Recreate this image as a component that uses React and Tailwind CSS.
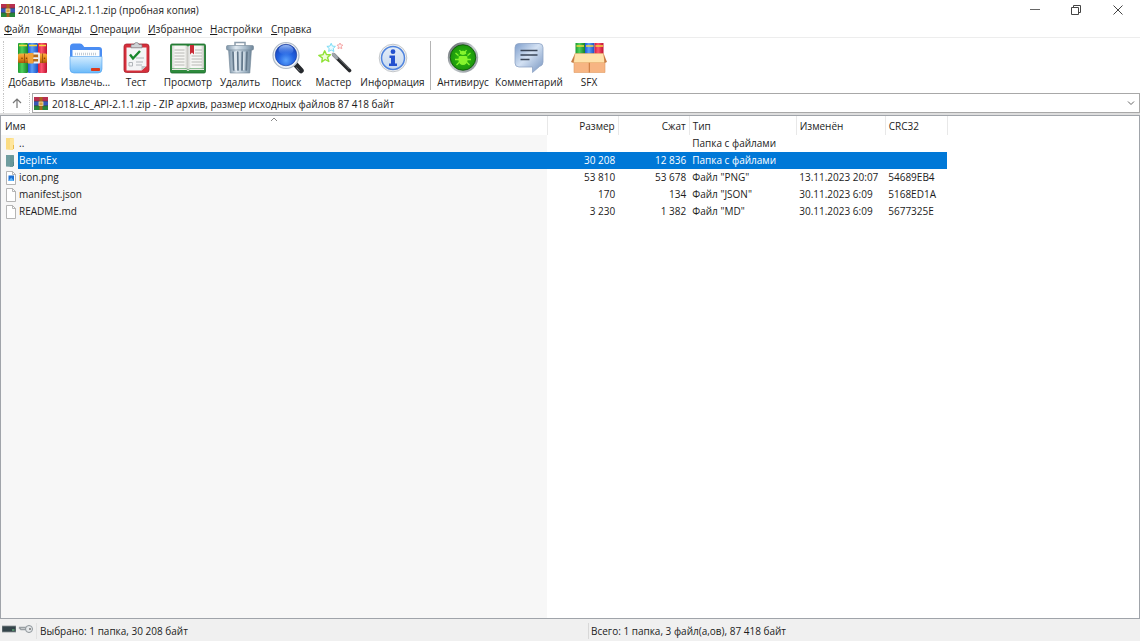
import React, { useState } from "react";

const BooksIcon = () => (
  <svg viewBox="0 0 36 34" className="w-9 h-[34px]">
    <defs>
      <linearGradient id="bookGreen" x1="0" x2="1"><stop offset="0" stopColor="#1d9a2e" /><stop offset=".4" stopColor="#4fd05e" /><stop offset="1" stopColor="#14802a" /></linearGradient>
      <linearGradient id="bookBlue" x1="0" x2="1"><stop offset="0" stopColor="#1d55d8" /><stop offset=".4" stopColor="#5aa0fa" /><stop offset="1" stopColor="#1c4fc0" /></linearGradient>
      <linearGradient id="bookRed" x1="0" x2="1"><stop offset="0" stopColor="#d81b3c" /><stop offset=".4" stopColor="#fb5470" /><stop offset="1" stopColor="#c01030" /></linearGradient>
      <linearGradient id="belt" x1="0" x2="0" y1="0" y2="1"><stop offset="0" stopColor="#f9b045" /><stop offset=".5" stopColor="#e88a1a" /><stop offset="1" stopColor="#a9560c" /></linearGradient>
    </defs>
    <rect x="4" y="2" width="10" height="30" rx="1" fill="url(#bookGreen)" />
    <rect x="14" y="2" width="10" height="30" rx="1" fill="url(#bookBlue)" />
    <rect x="24" y="2" width="9" height="30" rx="1" fill="url(#bookRed)" />
    <path d="M5 4.500h8M15 4.500h8M25 4.500h7" stroke="#f5d93c" strokeWidth="1.600" />
    <rect x="4" y="12.500" width="29" height="9.500" rx="1.500" fill="url(#belt)" />
    <path d="M10.500 12.500v9.500M28.500 12.500v9.500" stroke="#8a4a10" strokeWidth=".8" />
    <path d="M14 12h5v10.500h-5z" fill="#f0a23a" />
    <path d="M19.500 12.500h5.500v9h-5.500" fill="#b56a1c" stroke="#f1f3f5" strokeWidth="1.800" strokeLinejoin="round" />
    <path d="M20 17.200h3.500" stroke="#f2f4f6" strokeWidth="1.800" strokeLinecap="round" />
    <circle cx="8" cy="17.200" r=".8" fill="#7a3d08" />
    <circle cx="12.500" cy="17.200" r=".8" fill="#7a3d08" />
    <circle cx="30.500" cy="17.200" r=".8" fill="#7a3d08" />
  </svg>
);

const ExtractIcon = () => (
  <svg viewBox="0 0 36 34" className="w-9 h-[34px]">
    <defs>
      <linearGradient id="folderFront" x1="0" x2="0" y1="0" y2="1"><stop offset="0" stopColor="#d3ecff" /><stop offset="1" stopColor="#6bbaf9" /></linearGradient>
    </defs>
    <path d="M2 6q0-3.500 3.500-3.500h6.500q2 0 3 1.800l1.200 1.700H31q3 0 3 3V24H2z" fill="#4a8df3" />
    <path d="M4.500 9h27v12h-27z" fill="#fdfefe" />
    <path d="M7 13h22" stroke="#c3ccd6" strokeWidth="2.500" strokeDasharray="1 1" />
    <path d="M2 15.500h32V28q0 4-4 4H6q-4 0-4-4z" fill="url(#folderFront)" stroke="#4c9def" strokeWidth=".6" />
    <rect x="23" y="27" width="9" height="3" rx=".8" fill="#dc3a1c" />
  </svg>
);

const TestIcon = () => (
  <svg viewBox="0 0 36 34" className="w-9 h-[34px]">
    <rect x="6" y="3" width="25" height="28.500" rx="2.500" fill="#d62f3b" stroke="#a81f2b" strokeWidth=".8" />
    <path d="M8.500 6.500h20V25l-5 4.500h-15z" fill="#f4f5f6" />
    <path d="M28.500 25l-5 4.500V25z" fill="#bfc4c8" />
    <path d="M13 6.800V4.500q0-1 1-1h2q.5-2 2.500-2t2.500 2h2q1 0 1 1v2.300z" fill="#cfd3d6" stroke="#777d82" strokeWidth=".7" />
    <path d="M12 13.500l3 4 7-7.500" fill="none" stroke="#18872c" strokeWidth="2.400" />
    <path d="M18 17h8M11 21.500h3.500v3.500H11zM18 21h7M18 24h6" fill="none" stroke="#b0b5b9" strokeWidth="1" />
  </svg>
);

const ViewIcon = () => (
  <svg viewBox="0 0 36 34" className="w-9 h-[34px]">
    <defs>
      <linearGradient id="page" x1="0" x2="1"><stop offset="0" stopColor="#d5d5d2" /><stop offset=".2" stopColor="#f8f8f6" /><stop offset=".8" stopColor="#f4f4f1" /><stop offset="1" stopColor="#c2c2bd" /></linearGradient>
    </defs>
    <rect x="0.500" y="3" width="35" height="29" rx="1.500" fill="#2e8b3d" stroke="#1b6b2b" strokeWidth=".8" />
    <path d="M2 4.500h14q2 0 2 1.500v23q0-1.500-2-1.500H2z" fill="url(#page)" />
    <path d="M34 4.500H20q-2 0-2 1.500v23q0-1.500 2-1.500h14z" fill="url(#page)" />
    <path d="M2 28.500h14q2 0 2 1.500 0-1.500 2-1.500h14" fill="none" stroke="#e9e9e4" strokeWidth="1" />
    <path d="M4.500 9h10M4.500 12h10M4.500 15h10M4.500 18h10M4.500 21h10M4.500 24h10M25 9h7M25 12h7M21.500 15H32M21.500 18H32M21.500 21H32M21.500 24H32" stroke="#b8b8b4" strokeWidth="1" />
    <path d="M20 4h4v9.500l-2-2-2 2z" fill="#c92a35" />
  </svg>
);

const DeleteIcon = () => (
  <svg viewBox="0 0 36 34" className="w-9 h-[34px]">
    <defs>
      <linearGradient id="bin" x1="0" x2="1"><stop offset="0" stopColor="#7d94a8" /><stop offset=".35" stopColor="#dfe9f1" /><stop offset=".7" stopColor="#a9bccb" /><stop offset="1" stopColor="#6e8599" /></linearGradient>
    </defs>
    <path d="M13 4.500V1.500h10v3" fill="none" stroke="#8c9dac" strokeWidth="1.500" />
    <path d="M6.500 8h23l-1.700 24H8.200z" fill="url(#bin)" stroke="#6f8394" strokeWidth=".6" />
    <path d="M11 11l.7 18M15.700 11l.3 18M20.300 11l-.3 18M25 11l-.7 18" stroke="#62778a" strokeWidth="1.700" strokeLinecap="round" />
    <path d="M12.700 11l.6 18M22 11l-.3 18" stroke="#f5f9fc" strokeWidth=".8" />
    <rect x="4.500" y="4.500" width="27" height="4.500" rx="1.200" fill="url(#bin)" stroke="#6f8394" strokeWidth=".6" />
  </svg>
);

const SearchIcon = () => (
  <svg viewBox="0 0 36 34" className="w-9 h-[34px]">
    <defs>
      <radialGradient id="lens" cx=".5" cy=".75" r=".75"><stop offset="0" stopColor="#5aa2fc" /><stop offset=".5" stopColor="#2262e0" /><stop offset="1" stopColor="#173fb4" /></radialGradient>
      <linearGradient id="lensGlow" x1="0" x2="0" y1="0" y2="1"><stop offset="0" stopColor="#a9c9fb" stopOpacity=".9" /><stop offset="1" stopColor="#4d85ee" stopOpacity=".1" /></linearGradient>
    </defs>
    <path d="M25 22l2.500 2.500" stroke="#9aa2aa" strokeWidth="3" />
    <path d="M27 24l5 5.500" stroke="#26292d" strokeWidth="5.500" strokeLinecap="round" />
    <path d="M27.500 26.500l3 3.300" stroke="#777d84" strokeWidth="1" />
    <circle cx="17" cy="14.500" r="13" fill="#eef2f7" stroke="#b1bbc6" strokeWidth="1.200" />
    <circle cx="17" cy="14" r="10.800" fill="url(#lens)" stroke="#17348c" strokeWidth=".5" />
    <ellipse cx="17" cy="9" rx="7.500" ry="5" fill="url(#lensGlow)" />
  </svg>
);

const WizardIcon = () => (
  <svg viewBox="0 0 36 34" className="w-9 h-[34px]">
    <path d="M8.700 9.800l1.700 3.700 4 .2-2.900 2.800 1.300 4-3.700-2-3.300 2.500.5-4.200-3.500-2.300 4.200-.9z" fill="#effcdc" stroke="#8fe236" strokeWidth="1.400" strokeLinejoin="round" />
    <path d="M15.200 2.300l1.200 2.800 3 .3-2.200 2.100.7 3-2.700-1.500-2.600 1.500.6-3-2.300-2.100 3-.3z" fill="#eafaff" stroke="#7bdcf5" strokeWidth="1" strokeLinejoin="round" />
    <path d="M24 2l.9 1.900 2 .2-1.500 1.500.4 2.100-1.900-1-1.900 1 .4-2.100L21 4.100l2-.2z" fill="#fff0f0" stroke="#f4a0a0" strokeWidth=".9" strokeLinejoin="round" />
    <path d="M18 14l15.500 15.500" stroke="#25272a" strokeWidth="3.600" strokeLinecap="round" />
    <path d="M17.300 13.300l3.400 3.400" stroke="#a0a6ac" strokeWidth="3.400" strokeLinecap="round" />
    <path d="M21.500 16l12 12" stroke="#81868b" strokeWidth=".9" />
  </svg>
);

const InfoIcon = () => (
  <svg viewBox="0 0 36 34" className="w-9 h-[34px]">
    <defs>
      <linearGradient id="infoFace" x1="0" x2="0" y1="0" y2="1"><stop offset="0" stopColor="#e4edf8" /><stop offset="1" stopColor="#c7d9ef" /></linearGradient>
    </defs>
    <circle cx="18" cy="17" r="13.800" fill="#f2f2f2" stroke="#c3c7cb" strokeWidth="1" />
    <circle cx="18" cy="17" r="11.500" fill="url(#infoFace)" stroke="#4f84de" strokeWidth="1.500" />
    <circle cx="18" cy="10.700" r="2.400" fill="#2351cf" />
    <path d="M14.500 14.500H20v8h2V25h-8v-2.500h2v-5.500h-1.500z" fill="#2351cf" />
  </svg>
);

const AntivirusIcon = () => (
  <svg viewBox="0 0 36 34" className="w-9 h-[34px]">
    <defs>
      <radialGradient id="virusFace" cx=".5" cy=".5" r=".5"><stop offset="0" stopColor="#2fc010" /><stop offset="1" stopColor="#1c960c" /></radialGradient>
      <linearGradient id="virusRing" x1="0" x2="1" y1="0" y2="1"><stop offset="0" stopColor="#50565b" /><stop offset=".5" stopColor="#c7ccd0" /><stop offset="1" stopColor="#858c92" /></linearGradient>
    </defs>
    <circle cx="18" cy="16.500" r="15.200" fill="url(#virusRing)" />
    <circle cx="18" cy="16.500" r="12.800" fill="url(#virusFace)" stroke="#0a4c08" strokeWidth=".8" />
    <path d="M14.500 9l2 3M21.500 9l-2 3M10.500 12l3.500 3M25.500 12L22 15M10 18.500h4M26 18.500h-4M11.500 24l3-3M24.500 24l-3-3" stroke="#86f52d" strokeWidth="1.300" fill="none" />
    <ellipse cx="18" cy="18.500" rx="4.600" ry="5.600" fill="#86f52d" />
    <path d="M14.800 13a3.200 3.200 0 0 1 6.400 0z" fill="#86f52d" />
    <path d="M13.500 14.500h9" stroke="#159a0c" strokeWidth=".8" />
  </svg>
);

const CommentIcon = () => (
  <svg viewBox="0 0 36 34" className="w-9 h-[34px]">
    <defs>
      <linearGradient id="bubble" x1="0" x2="1" y1="0" y2="1"><stop offset="0" stopColor="#7d9dcb" /><stop offset=".45" stopColor="#d3e1f3" /><stop offset="1" stopColor="#7593bf" /></linearGradient>
    </defs>
    <path d="M8 2.500h20q4 0 4 4V21q0 3.500-3.500 4.500L21.500 31.500V26H8q-4 0-4-4V6.500q0-4 4-4z" fill="url(#bubble)" stroke="#8fa5c5" strokeWidth=".8" />
    <path d="M9.500 9.500h17M9.500 14h17M9.500 18.500h9" stroke="#3a4658" strokeWidth="1.500" />
  </svg>
);

const SfxIcon = () => (
  <svg viewBox="0 0 36 34" className="w-9 h-[34px]">
    <rect x="4.500" y="2" width="9.500" height="13" fill="url(#bookGreen)" />
    <rect x="14" y="2" width="9.500" height="13" fill="url(#bookBlue)" />
    <rect x="23.500" y="2" width="9" height="13" fill="url(#bookRed)" />
    <path d="M5.500 5h7.500M15 5h7.500M24.500 5H32" stroke="#f5d93c" strokeWidth="1.600" />
    <path d="M3 20h31v11.500H3z" fill="#f7b583" stroke="#e09a62" strokeWidth=".6" />
    <path d="M18.300 21v10.500" stroke="#c6763a" strokeWidth="1" />
    <path d="M4 12.500h28.500l1.500 9H2.500z" fill="#ffe2ac" stroke="#e5b070" strokeWidth=".6" />
    <path d="M4 12.500L0 21l2.500 1z" fill="#c87d44" />
    <path d="M32.500 12.500l3.500 8.500-2.500 1z" fill="#c87d44" />
  </svg>
);

const ArchiveIcon = () => (
  <svg viewBox="0 0 14 13" className="w-3.5 h-[13px] shrink-0">
    <rect width="14" height="4.300" fill="#b8304f" />
    <rect y="4.300" width="14" height="4.400" fill="#3858b8" />
    <rect y="8.700" width="14" height="4.300" fill="#27873a" />
    <path d="M0 4.300h14M0 8.700h14" stroke="#1d1f38" strokeWidth=".6" />
    <rect x="5.500" width="3" height="13" fill="#a8651f" />
    <rect x="5" y="5" width="4" height="3.500" fill="#d9a03c" stroke="#f1dd9d" strokeWidth=".8" />
  </svg>
);

const FolderIcon = ({ selected }) => (
  <svg viewBox="0 0 14 14" className="w-3.5 h-3.5 shrink-0">
    <path d="M2 1h7v12l-7-.5z" fill={selected ? "#6f9d9f" : "#fbdc82"} />
    <path d="M6 2l4-1v11l-4 1z" fill={selected ? "#689799" : "#ffe69c"} />
    <path d="M9 8h1v4H9z" fill={selected ? "#55868a" : "#e9bb4d"} />
  </svg>
);

const FileIcon = ({ image }) => (
  <svg viewBox="0 0 14 14" className="w-3.5 h-3.5 shrink-0">
    <path d="M2.500.5h6l3 3v10h-9z" fill="#fff" stroke="#a3a3a3" strokeWidth=".8" />
    <path d="M8.500.5v3h3" fill="none" stroke="#a3a3a3" strokeWidth=".8" />
    {image && (
      <>
        <rect x="4.500" y="4.500" width="5.500" height="5.500" fill="#1b6fd4" />
        <path d="M4.500 10l2.700-3.500L10 10z" fill="#62b8fa" />
      </>
    )}
  </svg>
);

const menus = [
  ["Ф", "айл", "w-[33px]"],
  ["К", "оманды", "w-[53px]"],
  ["О", "перации", "w-[58px]"],
  ["И", "збранное", "w-[62px]"],
  ["Н", "астройки", "w-[61px]"],
  ["С", "правка", "w-[52px]"],
];

const tools = [
  { label: "Добавить", icon: BooksIcon, width: "w-[52px]" },
  { label: "Извлечь...", icon: ExtractIcon, width: "w-[55px]" },
  { label: "Тест", icon: TestIcon, width: "w-[46px]" },
  { label: "Просмотр", icon: ViewIcon, width: "w-[58px]" },
  { label: "Удалить", icon: DeleteIcon, width: "w-[46px]" },
  { label: "Поиск", icon: SearchIcon, width: "w-[47px]" },
  { label: "Мастер", icon: WizardIcon, width: "w-[47px]" },
  { label: "Информация", icon: InfoIcon, width: "w-[71px]" },
];

const extraTools = [
  { label: "Антивирус", icon: AntivirusIcon, width: "w-[58px]" },
  { label: "Комментарий", icon: CommentIcon, width: "w-[74px]" },
  { label: "SFX", icon: SfxIcon, width: "w-[46px]" },
];

const files = [
  { name: "..", kind: "folder", size: "", packed: "", type: "Папка с файлами", date: "", crc: "" },
  { name: "BepInEx", kind: "folder", size: "30 208", packed: "12 836", type: "Папка с файлами", date: "", crc: "" },
  { name: "icon.png", kind: "image", size: "53 810", packed: "53 678", type: 'Файл "PNG"', date: "13.11.2023 20:07", crc: "54689EB4" },
  { name: "manifest.json", kind: "file", size: "170", packed: "134", type: 'Файл "JSON"', date: "30.11.2023 6:09", crc: "5168ED1A" },
  { name: "README.md", kind: "file", size: "3 230", packed: "1 382", type: 'Файл "MD"', date: "30.11.2023 6:09", crc: "5677325E" },
];

const ToolButton = ({ label, icon: Icon, width }) => (
  <button className={`${width} shrink-0 flex flex-col items-center whitespace-nowrap leading-[14px] hover:bg-blue-50`}>
    <Icon />
    <span>{label}</span>
  </button>
);

const App = () => {
  const [selected, setSelected] = useState("BepInEx");

  return (
    <div className="h-screen flex flex-col overflow-hidden bg-white text-[#1c1c1c] font-['Open_Sans','Noto_Sans',sans-serif] text-[10px] leading-4">
      {/* Title bar */}
      <header className="flex items-center h-5 pl-px pr-px shrink-0">
        <ArchiveIcon />
        <h1 className="pl-[3px] flex-1 whitespace-nowrap">2018-LC_API-2.1.1.zip (пробная копия)</h1>
        <button aria-label="Свернуть" className="w-10 h-5 flex items-center justify-center">
          <svg viewBox="0 0 10 10" className="w-2.5 h-2.5"><path d="M0 4.500h10" stroke="#666" /></svg>
        </button>
        <button aria-label="Восстановить" className="w-[42px] h-5 flex items-center justify-center">
          <svg viewBox="0 0 10 10" className="w-2.5 h-2.5" fill="none" stroke="#444"><path d="M.5 2.500h7v7h-7zM2.500 2.500v-2h7v7h-2" /></svg>
        </button>
        <button aria-label="Закрыть" className="w-[42px] h-5 flex items-center justify-center">
          <svg viewBox="0 0 10 10" className="w-2.5 h-2.5" stroke="#444"><path d="M.5.5l9 9M9.500.5l-9 9" /></svg>
        </button>
      </header>

      {/* Menu */}
      <nav className="flex h-[18px] pl-1 pt-px shrink-0 border-b border-[#ededed]">
        {menus.map(([key, rest, width]) => (
          <button key={rest} className={`${width} flex items-center text-left whitespace-nowrap leading-4`}>
            <span className="underline">{key}</span>{rest}
          </button>
        ))}
      </nav>

      {/* Toolbar */}
      <div className="flex items-start h-[54px] pl-[3px] pt-[3px] shrink-0">
        <div className="w-[3px] h-[50px] border-l border-dotted border-[#c4c4c4] shrink-0" />
        {tools.map((tool) => <ToolButton key={tool.label} {...tool} />)}
        <div className="w-px h-[49px] ml-0.5 mr-[3px] bg-[#b4b4b4] shrink-0" />
        {extraTools.map((tool) => <ToolButton key={tool.label} {...tool} />)}
      </div>

      {/* Address bar */}
      <div className="flex h-[23px] pt-px pl-[3px] shrink-0 border-b-2 border-[#dedede]">
        <button aria-label="Вверх" className="w-[27px] flex items-center justify-center border-x border-dotted border-[#c4c4c4]">
          <svg viewBox="0 0 10 10" className="w-2.5 h-2.5" fill="none" stroke="#777" strokeWidth="1.200"><path d="M5 10V1M1 5l4-4 4 4" /></svg>
        </button>
        <div className="flex-1 flex items-center relative border border-[#a8a8a8] ml-0.5 pl-px">
          <ArchiveIcon />
          <select aria-label="Путь" className="flex-1 appearance-none outline-none bg-transparent pl-1 pt-px leading-4">
            <option>2018-LC_API-2.1.1.zip - ZIP архив, размер исходных файлов 87 418 байт</option>
          </select>
          <svg viewBox="0 0 8 6" className="w-2 h-1.5 absolute right-1 pointer-events-none" fill="none" stroke="#666"><path d="M1 1.500l3 3 3-3" /></svg>
        </div>
      </div>

      {/* File list */}
      <main className="flex-1 min-h-0 border border-[#a0a4aa]">
        <table className="w-full h-full table-fixed border-collapse whitespace-nowrap">
          <colgroup>
            <col className="w-[48%]" />
            <col className="w-[71px]" />
            <col className="w-[71px]" />
            <col className="w-[107px]" />
            <col className="w-[89px]" />
            <col className="w-[62px]" />
            <col />
          </colgroup>
          <thead>
            <tr className="h-[19px]">
              <th className="relative font-normal text-left pl-1 py-0 border-r border-[#e8e8e8]">
                Имя
                <svg viewBox="0 0 8 5" className="w-2 h-[5px] absolute top-px left-1/2 -translate-x-1/2" fill="none" stroke="#888"><path d="M1 4l3-3 3 3" /></svg>
              </th>
              <th className="font-normal text-right py-0 pr-[3px] border-r border-[#e8e8e8]">Размер</th>
              <th className="font-normal text-right py-0 pr-[3px] border-r border-[#e8e8e8]">Сжат</th>
              <th className="font-normal text-left py-0 pl-[3px] border-r border-[#e8e8e8]">Тип</th>
              <th className="font-normal text-left py-0 pl-[3px] border-r border-[#e8e8e8]">Изменён</th>
              <th className="font-normal text-left py-0 pl-[3px] border-r border-[#e8e8e8]">CRC32</th>
              <td />
            </tr>
          </thead>
          <tbody>
            {files.map((file) => {
              const active = file.name === selected;
              const cell = active ? "bg-[#0078d7] text-white" : "";
              return (
                <tr key={file.name} className="h-[17px] leading-[17px]" onClick={() => setSelected(file.name)}>
                  <td className="p-0 bg-[#f7f7f7]">
                    <div className="flex items-center pl-[3px]">
                      {file.kind === "folder" ? <FolderIcon selected={active} /> : <FileIcon image={file.kind === "image"} />}
                      <span className={`flex-1 pl-px ${cell}`}>{file.name}</span>
                    </div>
                  </td>
                  <td className={`text-right py-0 pr-[3px] ${cell}`}>{file.size}</td>
                  <td className={`text-right py-0 pr-[3px] ${cell}`}>{file.packed}</td>
                  <td className={`py-0 pl-[3px] ${cell}`}>{file.type}</td>
                  <td className={`py-0 pl-[3px] ${cell}`}>{file.date}</td>
                  <td className={`py-0 pl-[3px] ${cell}`}>{file.crc}</td>
                  <td />
                </tr>
              );
            })}
            <tr>
              <td className="bg-[#f7f7f7]" />
              <td colSpan="6" />
            </tr>
          </tbody>
        </table>
      </main>

      {/* Status bar */}
      <footer className="flex items-center h-[22px] shrink-0 bg-[#f0f0f0] pt-0.5">
        <div className="w-9 flex items-center gap-0.5 pl-0.5 pb-1 shrink-0">
          <svg viewBox="0 0 14 8" className="w-3.5 h-2"><rect y="1" width="14" height="6" fill="#34444a" stroke="#8a9195" strokeWidth=".8" /><path d="M10 5h2.500" stroke="#70d58a" /></svg>
          <svg viewBox="0 0 16 10" className="w-4 h-2.5"><path d="M1 3.500h8M1 3.500l2 2h5" fill="none" stroke="#999fa3" strokeWidth="1.500" /><circle cx="11" cy="5" r="3.500" fill="#e5e8ea" stroke="#8d9499" /><circle cx="12" cy="5" r="1" fill="#777" /></svg>
        </div>
        <div className="flex-1 flex">
          <p className="w-1/2 pl-[3px] border-l border-[#e2e2e2]">Выбрано: 1 папка, 30 208 байт</p>
          <p className="w-1/2 pl-0.5 border-l border-[#d8d8d8]">Всего: 1 папка, 3 файл(а,ов), 87 418 байт</p>
        </div>
      </footer>
    </div>
  );
};

export default App;
